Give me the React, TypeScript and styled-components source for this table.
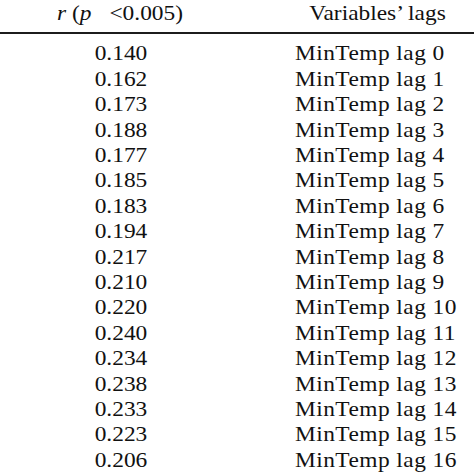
import React from "react";
import styled, { createGlobalStyle } from "styled-components";

const Global = createGlobalStyle`
  html, body { margin: 0; padding: 0; background: #ffffff; }
  body { font-family: "Liberation Serif", "Times New Roman", serif; color: #111111; }
`;

const Table = styled.div`
  display: grid;
  grid-template-columns: 240px 41px 193px;
  width: 474px;
  font-size: 23.4px;
  line-height: 25.4px;
`;

const HeadCell = styled.div<{ $col: number }>`
  grid-column: ${(p) => (p.$col === 0 ? "1" : "3")};
  text-align: center;
  padding-bottom: 6.6px;
  border-bottom: 2px solid #1c1c1c;
  white-space: nowrap;
`;

const Gap = styled.div`
  grid-column: 2;
  border-bottom: 2px solid #1c1c1c;
`;

const Spacer = styled.div`
  grid-column: 1 / 4;
  height: 6.4px;
`;

const Cell = styled.div<{ $col: number }>`
  grid-column: ${(p) => (p.$col === 0 ? "1" : "3")};
  text-align: ${(p) => (p.$col === 0 ? "center" : "left")};
  padding-left: ${(p) => (p.$col === 0 ? "2px" : "14px")};
  letter-spacing: ${(p) => (p.$col === 0 ? "0" : "0.45px")};
  white-space: nowrap;
`;

const Squeeze = styled.span`
  display: inline-block;
  transform: scaleY(0.86);
  transform-origin: 50% 20.6px;
`;

const Wide = styled.span`
  display: inline-block;
  width: 18px;
`;

const rows: [string, number][] = [
  ["0.140", 0],
  ["0.162", 1],
  ["0.173", 2],
  ["0.188", 3],
  ["0.177", 4],
  ["0.185", 5],
  ["0.183", 6],
  ["0.194", 7],
  ["0.217", 8],
  ["0.210", 9],
  ["0.220", 10],
  ["0.240", 11],
  ["0.234", 12],
  ["0.238", 13],
  ["0.233", 14],
  ["0.223", 15],
  ["0.206", 16],
];

export default function App() {
  return (
    <>
      <Global />
      <Table>
        <HeadCell $col={0}>
          <Squeeze>
            <i>r</i> (<i>p</i>
            <Wide />
            &lt;0.005)
          </Squeeze>
        </HeadCell>
        <Gap />
        <HeadCell $col={1}>
          <Squeeze>Variables’ lags</Squeeze>
        </HeadCell>
        <Spacer />
        {rows.map(([r, lag]) => (
          <React.Fragment key={lag}>
            <Cell $col={0}>
              <Squeeze>{r}</Squeeze>
            </Cell>
            <Cell $col={1}>
              <Squeeze>MinTemp lag {lag}</Squeeze>
            </Cell>
          </React.Fragment>
        ))}
      </Table>
    </>
  );
}
